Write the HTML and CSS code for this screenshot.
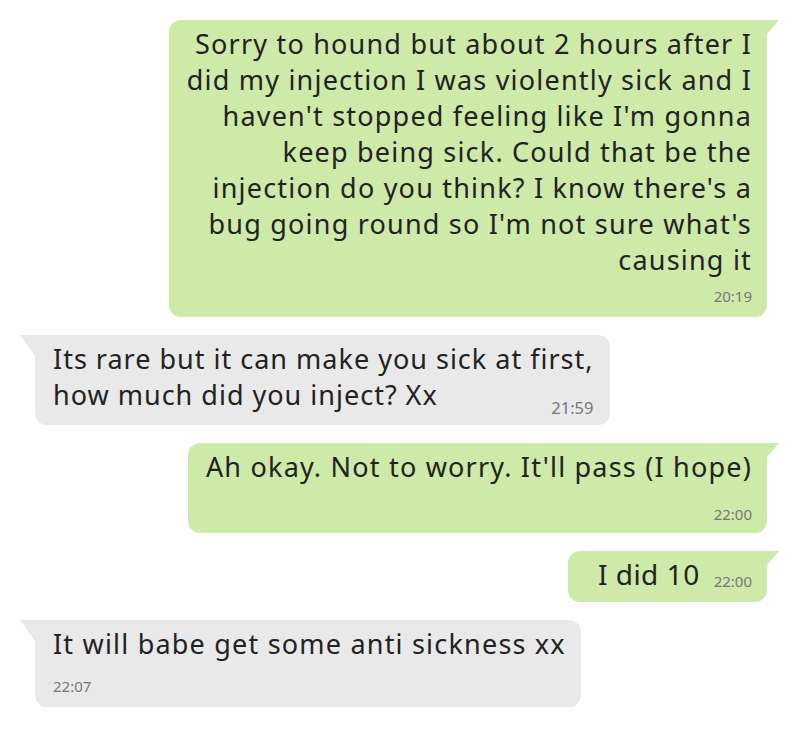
FILE: index.html
```html
<!DOCTYPE html>
<html lang="en">
<head>
    <meta charset="UTF-8">
    <meta name="viewport" content="width=device-width, initial-scale=1.0">
    <title>Messages</title>
    <link rel="stylesheet" href="styles.css">
</head>
<body>

<div class="chat">
    <div class="msg out">
        <p class="text">Sorry to hound but about 2 hours after I<br>did my injection I was violently sick and I<br>haven't stopped feeling like I'm gonna<br>keep being sick. Could that be the<br>injection do you think? I know there's a<br>bug going round so I'm not sure what's<br>causing it</p>
        <span class="time">20:19</span>
    </div>

    <div class="msg in tucked">
        <p class="text">Its rare but it can make you sick at first,<br>how much did you inject? Xx</p>
        <span class="time">21:59</span>
    </div>

    <div class="msg out spaced">
        <p class="text">Ah okay. Not to worry. It'll pass (I hope)</p>
        <span class="time">22:00</span>
    </div>

    <div class="msg out row">
        <p class="text">I did 10</p>
        <span class="time">22:00</span>
    </div>

    <div class="msg in roomy">
        <p class="text">It will babe get some anti sickness xx</p>
        <span class="time">22:07</span>
    </div>
</div>

</body>
</html>
```

FILE: styles.css
```css
body {
    margin: 0;
    background: #fff;
    font-family: "Noto Sans", "Open Sans", sans-serif;
    color: #222;
}
.chat {
    display: flex;
    flex-direction: column;
    gap: 18px;
    padding: 20px 33px 20px 35px;
}
.msg {
    position: relative;
    display: flex;
    flex-direction: column;
    padding: 6px 15px 12px 18px;
    border-radius: 12px;
}
.msg .text {
    margin: 0;
    font-size: 27px;
    line-height: 36px;
    letter-spacing: 1.2px;
    white-space: nowrap;
}
.msg .time {
    font-size: 15px;
    line-height: 18px;
    color: #777;
    margin-top: 9px;
}
.out {
    align-self: flex-end;
    align-items: flex-end;
    text-align: right;
    background: #cdeaa8;
    border-top-right-radius: 0;
}
.out::after {
    content: "";
    position: absolute;
    top: 0;
    right: -12px;
    width: 12px;
    height: 14px;
    background: #cdeaa8;
    clip-path: polygon(0 0, 100% 0, 0 100%);
}
.in {
    align-self: flex-start;
    align-items: flex-start;
    background: #e9e9e9;
    border-top-left-radius: 0;
}
.in::before {
    content: "";
    position: absolute;
    top: 0;
    left: -15px;
    width: 15px;
    height: 21px;
    background: #e9e9e9;
    clip-path: polygon(0 0, 100% 0, 100% 100%);
}

/* timestamp sits on the last text line */
.tucked {
    padding-bottom: 8px;
    padding-right: 17px;
}
.tucked .text {
    letter-spacing: 1px;
}
.tucked .time {
    align-self: flex-end;
    font-size: 16.5px;
    margin-top: -14px;
}
.spaced {
    padding-bottom: 10px;
}
.spaced .time {
    margin-top: 20px;
}
.roomy .time {
    margin-top: 15px;
}
.row {
    flex-direction: row;
    align-items: flex-end;
    gap: 14px;
    padding: 5px 15px 9px 30px;
}
.row .text {
    font-size: 28px;
    line-height: 37px;
    letter-spacing: 0.5px;
}
.row .time {
    margin: 0 0 3px;
}
```
